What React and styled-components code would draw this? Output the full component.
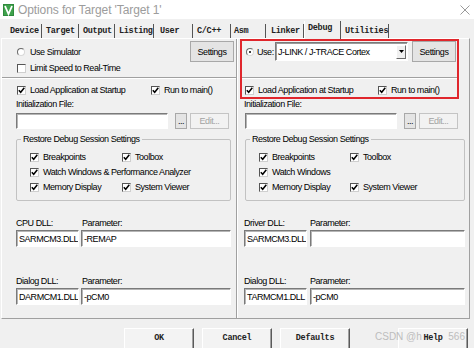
import React from "react";
import styled, { createGlobalStyle } from "styled-components";

const GlobalStyle = createGlobalStyle`
  html, body { margin: 0; padding: 0; background: #f0f0f0; }
  body { font-family: "Liberation Sans", Arial, sans-serif; }
  * { box-sizing: border-box; }
`;

const Window = styled.div`
  position: relative;
  width: 474px;
  height: 348px;
  overflow: hidden;
  display: flex;
  flex-direction: column;
  background: #f0f0f0;
  font-family: "Liberation Sans", Arial, sans-serif;
  font-size: 9px;
  letter-spacing: -0.45px;
  color: #000;
`;

const TitleBar = styled.div`
  height: 19px;
  flex-shrink: 0;
  display: flex;
  align-items: center;
  padding: 0 4px 0 3px;
  background: #fff;
`;

const Title = styled.span`
  flex: 1;
  margin-left: 4px;
  font-size: 12px;
  letter-spacing: -0.1px;
  color: #9c9c9c;
`;

const TabStrip = styled.div`
  height: 19px;
  flex-shrink: 0;
  display: flex;
  align-items: flex-end;
  padding-left: 2px;
  font-family: "Liberation Mono", monospace;
  font-weight: bold;
  font-size: 8.5px;
  letter-spacing: -0.3px;
  color: #222;
`;

const Tab = styled.div`
  width: ${(p) => p.$w}px;
  height: ${(p) => (p.$active ? 18 : 14)}px;
  padding-left: ${(p) => p.$pad}px;
  padding-bottom: ${(p) => (p.$active ? 4 : 0)}px;
  display: flex;
  align-items: center;
  border-right: 1px solid #555;
  border-left: ${(p) => (p.$active ? "1px solid #fff" : "none")};
  margin-bottom: ${(p) => (p.$active ? -1 : 0)}px;
  background: #f0f0f0;
  position: relative;
  z-index: ${(p) => (p.$active ? 1 : 0)};
`;

const Panel = styled.div`
  height: 281px;
  flex-shrink: 0;
  margin: 0 4px 0 1px;
  display: flex;
  border: 1px solid;
  border-color: #fff #a0a0a0 #a0a0a0 #fff;
`;

const Pane = styled.div`
  width: ${(p) => (p.$w ? `${p.$w}px` : "auto")};
  flex: ${(p) => (p.$w ? "none" : 1)};
  display: flex;
  flex-direction: column;
  padding: ${(p) => p.$pad};
`;

const Divider = styled.div`
  width: 2px;
  flex-shrink: 0;
  border-left: 1px solid #a0a0a0;
  border-right: 1px solid #fff;
`;

const Highlight = styled.div`
  display: flex;
  flex-direction: column;
  margin: 0 6px 0 -4px;
  padding: 0 1px 1px 3px;
  border: 2px solid #e0262c;
`;

const Row = styled.div`
  display: flex;
  align-items: center;
  height: ${(p) => p.$h || 12}px;
  margin-top: ${(p) => p.$mt || 0}px;
  margin-left: ${(p) => p.$ml || 0}px;
  margin-right: ${(p) => p.$mr || 0}px;
  white-space: nowrap;
`;

const Separator = styled.div`
  height: 2px;
  margin: ${(p) => p.$m};
  border-top: 1px solid #a0a0a0;
  border-bottom: 1px solid #fff;
`;

const Label = styled.div`
  height: 10px;
  line-height: 10px;
  margin-top: ${(p) => p.$mt || 0}px;
  white-space: nowrap;
`;

const Gap = styled.div`
  height: ${(p) => p.$h}px;
  flex-shrink: 0;
`;

const Box = styled.span`
  width: 9px;
  height: 9px;
  flex-shrink: 0;
  display: inline-flex;
  align-items: center;
  justify-content: center;
  background: #fff;
  border: 1px solid;
  border-color: #555 #cfcfcf #cfcfcf #555;
`;

const Radio = styled.span`
  width: 8px;
  height: 8px;
  flex-shrink: 0;
  margin-left: 1px;
  display: inline-flex;
  align-items: center;
  justify-content: center;
  border-radius: 50%;
  background: #fff;
  border: 1px solid;
  border-color: #6a6a6a #d8d8d8 #d8d8d8 #6a6a6a;

  &::after {
    content: "";
    width: 2px;
    height: 2px;
    border-radius: 50%;
    background: ${(p) => (p.$on ? "#000" : "transparent")};
  }
`;

const Text = styled.span`
  margin-left: ${(p) => p.$ml ?? 4}px;
`;

const WinButton = styled.div`
  width: ${(p) => p.$w}px;
  height: ${(p) => p.$h || 17}px;
  flex-shrink: 0;
  margin-left: ${(p) => (p.$auto ? "auto" : `${p.$ml || 0}px`)};
  display: flex;
  align-items: center;
  justify-content: center;
  background: ${(p) => (p.$disabled ? "#f2f2f2" : "#e4e4e4")};
  border: 1px solid ${(p) => (p.$disabled ? "#c4c4c4" : "#a8a8a8")};
  color: ${(p) => (p.$disabled ? "#a3a3a3" : "#000")};
`;

const Field = styled.div`
  width: ${(p) => (p.$w ? `${p.$w}px` : "auto")};
  flex: ${(p) => (p.$w ? "none" : 1)};
  height: ${(p) => p.$h || 17}px;
  margin-left: ${(p) => p.$ml || 0}px;
  display: flex;
  align-items: center;
  padding-left: 2px;
  background: #fff;
  border: 1px solid;
  border-color: #7a7a7a #fff #fff #7a7a7a;
  box-shadow: inset 1px 1px 0 #b5b5b5;
  white-space: nowrap;
  overflow: hidden;
`;

const Combo = styled(Field)`
  margin-left: auto;
  justify-content: space-between;
  padding-right: 1px;
  box-shadow: inset 1px 1px 0 #9a9a9a;
`;

const ComboArrow = styled.span`
  width: 10px;
  height: 14px;
  display: flex;
  align-items: center;
  justify-content: center;
  background: #f0f0f0;
  border: 1px solid;
  border-color: #fff #6a6a6a #6a6a6a #fff;
`;

const Group = styled.fieldset`
  margin: 5px 0 0 ${(p) => p.$ml || 0}px;
  padding: 7px 0 7px 13px;
  border: 1px solid #c2c2c2;
  border-radius: 2px;
  min-width: 0;
`;

const Legend = styled.legend`
  margin-left: -9px;
  padding: 0 2px;
  height: 10px;
  line-height: 10px;
`;

const CheckGrid = styled.div`
  display: grid;
  grid-template-columns: ${(p) => p.$col}px auto;
  grid-auto-rows: 12px;
  row-gap: 3px;
`;

const GridItem = styled.div`
  display: flex;
  align-items: center;
  white-space: nowrap;
  grid-column: ${(p) => (p.$span ? "1 / span 2" : "auto")};
`;

const CheckCell = styled.div`
  width: ${(p) => p.$w}px;
  flex-shrink: 0;
  display: flex;
  align-items: center;
`;

const ButtonBar = styled.div`
  position: relative;
  display: flex;
  margin-top: 9px;
  padding-left: 124px;
  gap: 8px;
  font-family: "Liberation Mono", monospace;
  font-weight: bold;
  font-size: 8.5px;
  letter-spacing: -0.3px;
  color: #222;
`;

const DialogButton = styled.div`
  width: 70px;
  height: 24px;
  flex-shrink: 0;
  margin-left: ${(p) => (p.$push ? "auto" : 0)};
  margin-right: ${(p) => (p.$push ? 6 : 0)}px;
  display: flex;
  justify-content: center;
  padding-top: 4px;
  background: #f3f3f3;
  border: 1px solid;
  border-color: #fff #5a5a5a #5a5a5a #fff;
  box-shadow: inset -1px 0 0 #a0a0a0;
`;

const Watermark = styled.div`
  position: absolute;
  left: 375px;
  top: 3px;
  width: 90px;
  display: flex;
  justify-content: space-between;
  font-family: "Liberation Sans", Arial, sans-serif;
  font-weight: normal;
  font-size: 10px;
  letter-spacing: 0;
  color: #bdbdbd;
  pointer-events: none;
`;

const Check = ({ label, on = true }) => (
  <>
    <Box>
      {on && (
        <svg width="7" height="7" viewBox="0 0 7 7">
          <path d="M0.8 3.2 L2.7 5.3 L6.3 0.8" fill="none" stroke="#000" strokeWidth="1.5" />
        </svg>
      )}
    </Box>
    <Text>{label}</Text>
  </>
);

const KeilIcon = () => (
  <svg width="11" height="12" viewBox="0 0 11 12">
    <rect x="0" y="0" width="11" height="12" fill="#2f8a3c" />
    <rect x="1" y="1" width="9" height="10" fill="#3fa24c" />
    <path d="M2 2 L5.5 10 L9 2" fill="none" stroke="#fff" strokeWidth="1.8" />
  </svg>
);

const CloseIcon = () => (
  <svg width="10" height="10" viewBox="0 0 10 10">
    <path d="M0.5 0.5 L9.5 9.5 M9.5 0.5 L0.5 9.5" stroke="#9a9a9a" strokeWidth="1" />
  </svg>
);

const tabs = [
  { name: "Device", w: 40, pad: 8 },
  { name: "Target", w: 37, pad: 4 },
  { name: "Output", w: 36, pad: 4 },
  { name: "Listing", w: 39, pad: 4 },
  { name: "User", w: 39, pad: 6 },
  { name: "C/C++", w: 38, pad: 4 },
  { name: "Asm", w: 35, pad: 3 },
  { name: "Linker", w: 38, pad: 5 },
  { name: "Debug", w: 37, pad: 3, active: true },
  { name: "Utilities", w: 48, pad: 4 },
];

const LoadRow = ({ mt, ml, col }) => (
  <Row $mt={mt} $ml={ml}>
    <CheckCell $w={col}>
      <Check label="Load Application at Startup" />
    </CheckCell>
    <Check label="Run to main()" />
  </Row>
);

const InitFile = ({ mt, ml }) => (
  <>
    <Label $mt={mt}>Initialization File:</Label>
    <Row $h={16} $mt={4} $ml={ml}>
      <Field $w={152} $h={16} />
      <WinButton $w={12} $h={16} $ml={7}>...</WinButton>
      <WinButton $w={39} $h={16} $ml={3} $disabled>Edit...</WinButton>
    </Row>
  </>
);

const DllBlock = ({ title, dll, param, mt, gap }) => (
  <>
    <Row $h={10} $mt={mt}>
      <CheckCell $w={66}>{title}</CheckCell>
      <span>Parameter:</span>
    </Row>
    <Row $h={17} $mt={2}>
      <Field $w={63}>{dll}</Field>
      <Field $ml={gap}>{param}</Field>
    </Row>
  </>
);

const App = () => (
  <Window>
    <GlobalStyle />
    <TitleBar>
      <KeilIcon />
      <Title>Options for Target 'Target 1'</Title>
      <CloseIcon />
    </TitleBar>

    <TabStrip>
      {tabs.map((t) => (
        <Tab key={t.name} $w={t.w} $pad={t.pad} $active={t.active}>
          {t.name}
        </Tab>
      ))}
    </TabStrip>

    <Panel>
      <Pane $w={234} $pad="2px 5px 0 14px">
        <Row $h={21} $mr={-3}>
          <Radio />
          <Text $ml={5}>Use Simulator</Text>
          <WinButton $w={44} $h={21} $auto>Settings</WinButton>
        </Row>
        <Row $ml={1}>
          <Check label="Limit Speed to Real-Time" on={false} />
        </Row>
        <Separator $m="3px -5px 0 -14px" />
        <LoadRow mt={5} ml={1} col={134} />
        <InitFile mt={3} />
        <Group>
          <Legend>Restore Debug Session Settings</Legend>
          <CheckGrid $col={92}>
            <GridItem><Check label="Breakpoints" /></GridItem>
            <GridItem><Check label="Toolbox" /></GridItem>
            <GridItem $span><Check label="Watch Windows & Performance Analyzer" /></GridItem>
            <GridItem><Check label="Memory Display" /></GridItem>
            <GridItem><Check label="System Viewer" /></GridItem>
          </CheckGrid>
        </Group>
        <DllBlock title="CPU DLL:" dll="SARMCM3.DLL" param="-REMAP" mt={17} gap={2} />
        <DllBlock title="Dialog DLL:" dll="DARMCM1.DLL" param="-pCM0" mt={29} gap={2} />
      </Pane>

      <Divider />

      <Pane $pad="0 4px 0 6px">
        <Highlight>
          <Row $h={21}>
            <Radio $on />
            <Text $ml={3}>Use:</Text>
            <Combo $w={133} $h={19}>
              <span>J-LINK / J-TRACE Cortex</span>
              <ComboArrow>
                <svg width="5" height="3" viewBox="0 0 5 3">
                  <path d="M0 0 H5 L2.5 3 Z" fill="#000" />
                </svg>
              </ComboArrow>
            </Combo>
            <WinButton $w={44} $h={21} $ml={4}>Settings</WinButton>
          </Row>
          <Gap $h={12} />
          <Separator $m="3px -1px 0 -3px" />
          <LoadRow mt={5} col={133} />
        </Highlight>
        <InitFile mt={0} ml={1} />
        <Group $ml={1}>
          <Legend>Restore Debug Session Settings</Legend>
          <CheckGrid $col={91}>
            <GridItem><Check label="Breakpoints" /></GridItem>
            <GridItem><Check label="Toolbox" /></GridItem>
            <GridItem><Check label="Watch Windows" /></GridItem>
            <GridItem />
            <GridItem><Check label="Memory Display" /></GridItem>
            <GridItem><Check label="System Viewer" /></GridItem>
          </CheckGrid>
        </Group>
        <DllBlock title="Driver DLL:" dll="SARMCM3.DLL" param="" mt={17} gap={3} />
        <DllBlock title="Dialog DLL:" dll="TARMCM1.DLL" param="-pCM0" mt={29} gap={3} />
      </Pane>
    </Panel>

    <ButtonBar>
      <DialogButton>OK</DialogButton>
      <DialogButton>Cancel</DialogButton>
      <DialogButton>Defaults</DialogButton>
      <DialogButton $push>Help</DialogButton>
      <Watermark>
        <span>CSDN @h</span>
        <span>566</span>
      </Watermark>
    </ButtonBar>
  </Window>
);

export default App;
